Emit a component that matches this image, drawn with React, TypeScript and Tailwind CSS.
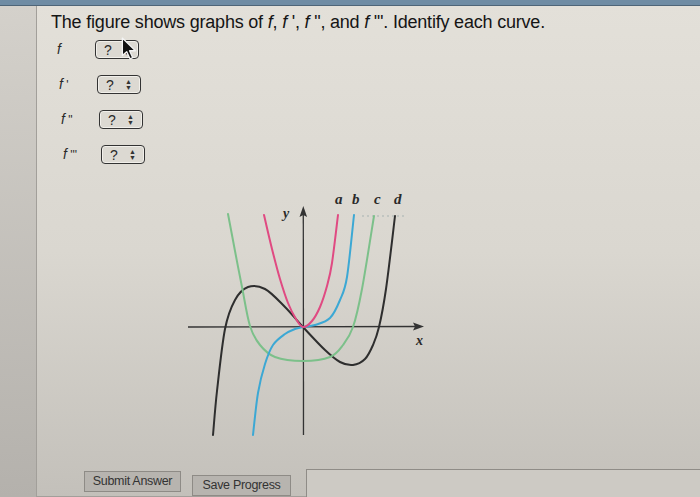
import React from "react";

type Pt = [number, number];

/** Catmull-Rom points -> smooth cubic bezier path. */
function smooth(points: Pt[]): string {
  let d = `M${points[0][0]},${points[0][1]}`;
  for (let i = 0; i < points.length - 1; i++) {
    const p0 = points[i - 1] ?? points[i];
    const p1 = points[i];
    const p2 = points[i + 1];
    const p3 = points[i + 2] ?? p2;
    const c1x = p1[0] + (p2[0] - p0[0]) / 6;
    const c1y = p1[1] + (p2[1] - p0[1]) / 6;
    const c2x = p2[0] - (p3[0] - p1[0]) / 6;
    const c2y = p2[1] - (p3[1] - p1[1]) / 6;
    d += ` C${c1x.toFixed(1)},${c1y.toFixed(1)} ${c2x.toFixed(1)},${c2y.toFixed(1)} ${p2[0]},${p2[1]}`;
  }
  return d;
}

const CURVES: { color: string; pts: Pt[] }[] = [
  {
    // d
    color: "#2e2e2e",
    pts: [
      [33, 256], [37, 212], [45, 150], [55, 121], [68, 108], [85, 110], [105, 128],
      [123, 148], [145, 171], [160, 183], [173, 186], [185, 180], [193, 166], [199, 148],
      [206, 110], [215, 37],
    ],
  },
  {
    // c
    color: "#7cc08a",
    pts: [
      [48, 35], [55, 72], [62, 108], [70, 147], [80, 166], [95, 178], [123, 182],
      [150, 178], [163, 166], [173, 148], [182, 110], [194, 37],
    ],
  },
  {
    // b
    color: "#3ca8d4",
    pts: [
      [73, 256], [78, 214], [85, 185], [93, 166], [105, 155], [115, 150], [123, 148],
      [135, 146], [150, 139], [160, 121], [167, 98], [174, 36],
    ],
  },
  {
    // a
    color: "#e04a82",
    pts: [
      [84, 36], [92, 70], [100, 100], [108, 124], [116, 140], [123, 148], [132, 142],
      [140, 128], [147, 107], [152, 84], [158, 36],
    ],
  },
];

function Graph() {
  return (
    <svg width="260" height="262" viewBox="0 0 260 262" className="block">
      {/* axes */}
      <line x1="8" y1="148" x2="238" y2="147.5" stroke="#333" strokeWidth="1.3" />
      <path d="M244,147.4 L233,143.5 L235,147.5 L233,151.5 Z" fill="#333" />
      <line x1="123.5" y1="256" x2="123.3" y2="33" stroke="#333" strokeWidth="1.3" />
      <path d="M123.3,27 L119.5,38 L123.3,36 L127.1,38 Z" fill="#333" />
      <line x1="182" y1="37" x2="224" y2="37" stroke="#9aa" strokeWidth="0.8" strokeDasharray="2 3" />
      {CURVES.map((c) => (
        <path key={c.color} d={smooth(c.pts)} fill="none" stroke={c.color} strokeWidth="2" strokeLinecap="round" />
      ))}
      <g fontFamily="'Liberation Serif', serif" fontStyle="italic" fontWeight="bold" fill="#2a2a2a">
        <text x="103" y="39" fontSize="14">y</text>
        <text x="155" y="25" fontSize="15">a</text>
        <text x="172" y="25" fontSize="15">b</text>
        <text x="194" y="25" fontSize="15">c</text>
        <text x="214" y="25" fontSize="15">d</text>
        <text x="236" y="166" fontSize="14">x</text>
      </g>
    </svg>
  );
}

function Dropdown() {
  return (
    <div className="flex items-center justify-between h-[19px] w-[44px] rounded-[4px] border-[1.5px] border-[#333] bg-[#dcd9d2] px-[8px] shadow-[inset_0_0_0_1px_#f1efea]">
      <span className="text-[14px] leading-none text-[#2a2a2a]">?</span>
      <span className="flex flex-col items-center text-[7px] leading-[6px] text-[#333]">
        <span>▲</span>
        <span>▼</span>
      </span>
    </div>
  );
}

const ROWS = [
  { label: "f", prime: "", shift: "ml-0" },
  { label: "f", prime: " '", shift: "ml-[2px]" },
  { label: "f", prime: ' "', shift: "ml-[4px]" },
  { label: "f", prime: " '''", shift: "ml-[6px]" },
];

function Cursor() {
  return (
    <svg width="18" height="24" viewBox="0 0 16 22" className="absolute left-[84px] top-[31px]">
      <path d="M1,1 L1,17 L5,13.5 L8,20 L10.5,19 L7.6,12.6 L13,12.6 Z" fill="#111" stroke="#f4f4f4" strokeWidth="1.2" strokeLinejoin="round" />
    </svg>
  );
}

export default function App() {
  return (
    <div className="w-[700px] h-[497px] overflow-hidden flex flex-col font-['Liberation_Sans',Arial,sans-serif] text-[#222]">
      <div className="h-[6px] bg-[#6f8ca4] border-b border-[#4e6578]" />
      <div className="flex-1 flex bg-gradient-to-b from-[#e3e0d9] via-[#dad7d0] to-[#c3c0ba]">
        <div className="w-[36px] bg-gradient-to-b from-[#d4d1cb] to-[#b4b1ac]" />
        <div className="relative flex-1 flex flex-col border-l border-b border-[#a29f9a] pl-[14px]">
          <div className="mt-[5px] text-[18px] leading-[22px] tracking-[-0.2px] text-[#151515]">
            The figure shows graphs of <i>f</i>, <i>f</i> ', <i>f</i> ", and <i>f</i> '". Identify each curve.
          </div>

          <div className="mt-[6px] flex flex-col gap-[14px]">
            {ROWS.map((r, i) => (
              <div key={i} className={`flex items-center ${r.shift}`}>
                <span className="w-[44px] pl-[6px] text-[14px] text-[#2a2a2a]">
                  <i>{r.label}</i>
                  <span className="text-[12px]">{r.prime}</span>
                </span>
                <Dropdown />
              </div>
            ))}
          </div>
          <Cursor />

          <div className="mt-[14px] ml-[129px]">
            <Graph />
          </div>

          <div className="mt-auto flex items-end">
            <button className="ml-[33px] mb-[4px] h-[21px] w-[97px] border border-[#8e8b86] bg-[#b7b4af] text-[12.5px] text-[#333] tracking-[-0.3px]">
              Submit Answer
            </button>
            <button className="ml-[11px] mb-0 h-[21px] w-[99px] border border-[#8e8b86] bg-[#b7b4af] text-[12.5px] text-[#333] tracking-[-0.3px]">
              Save Progress
            </button>
            <div className="ml-[15px] flex-1 h-[28px] -mb-px border-l border-t border-[#8f8c87] bg-[#cdcac4]" />
          </div>
        </div>
      </div>
    </div>
  );
}
